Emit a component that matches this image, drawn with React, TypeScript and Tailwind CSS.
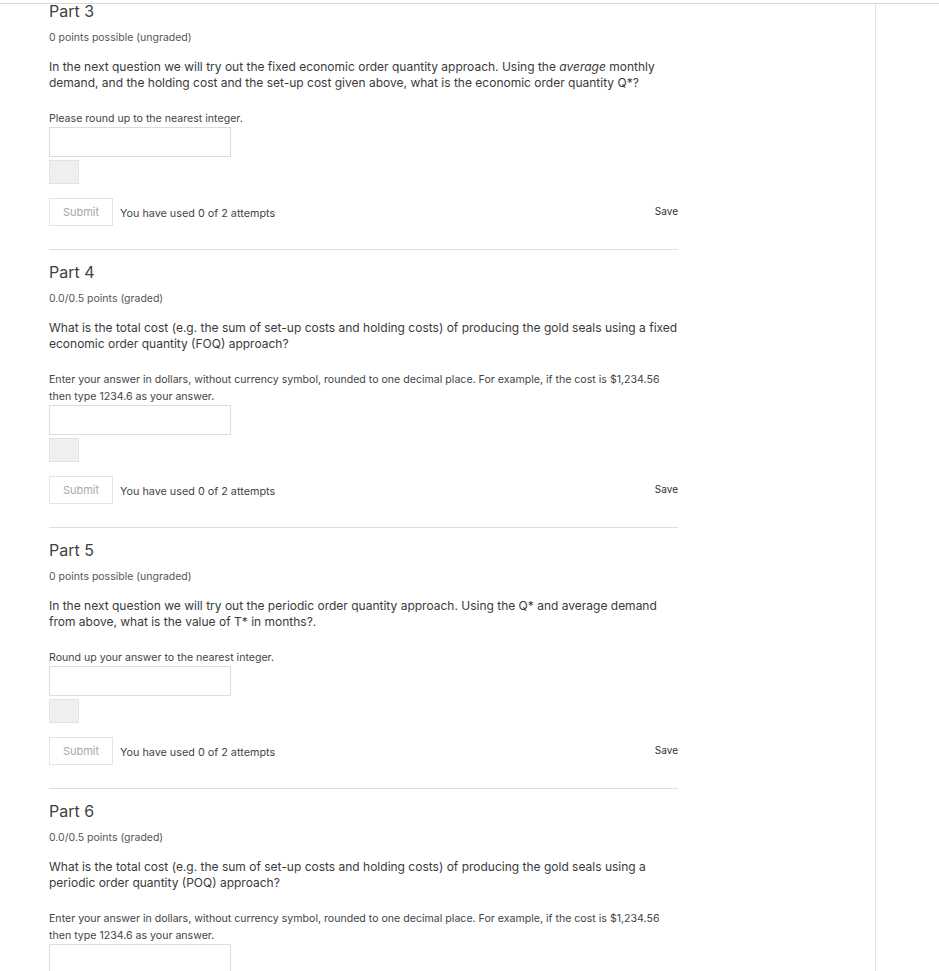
const parts = [
	{
		title: "Part 3",
		points: "0 points possible (ungraded)",
		question: (
			<>
				In the next question we will try out the fixed economic order quantity approach. Using the <em>average</em> monthly demand, and the holding cost and the set-up cost given above, what is the economic order quantity Q*?
			</>
		),
		hint: ["Please round up to the nearest integer."],
	},
	{
		title: "Part 4",
		points: "0.0/0.5 points (graded)",
		question: <>What is the total cost (e.g. the sum of set-up costs and holding costs) of producing the gold seals using a fixed economic order quantity (FOQ) approach?</>,
		hint: ["Enter your answer in dollars, without currency symbol, rounded to one decimal place. For example, if the cost is $1,234.56", "then type 1234.6 as your answer."],
	},
	{
		title: "Part 5",
		points: "0 points possible (ungraded)",
		question: <>In the next question we will try out the periodic order quantity approach. Using the Q* and average demand from above, what is the value of T* in months?.</>,
		hint: ["Round up your answer to the nearest integer."],
	},
	{
		title: "Part 6",
		points: "0.0/0.5 points (graded)",
		question: <>What is the total cost (e.g. the sum of set-up costs and holding costs) of producing the gold seals using a periodic order quantity (POQ) approach?</>,
		hint: ["Enter your answer in dollars, without currency symbol, rounded to one decimal place. For example, if the cost is $1,234.56", "then type 1234.6 as your answer."],
	},
]

type PartProps = {
	title: string
	points: string
	question: React.ReactNode
	hint: string[]
	first: boolean
}

const Part = ({ title, points, question, hint, first }: PartProps) => {
	return (
		<section className={"border-b border-[#dedede] pb-[23px] " + (first ? "-mt-[3px]" : "pt-[12px]")}>
			<h3 className="text-[16px] leading-5 text-[#414141] font-normal">{title}</h3>
			<div className="mt-[9px] text-[10.5px] leading-4 text-[#555]">{points}</div>
			<p className="mt-[13px] text-[12px] leading-4 text-[#3a3a3a] w-[632px]">{question}</p>
			<div className="mt-[19px] text-[10.6px] leading-[17px] text-[#444] whitespace-nowrap">
				{hint.map((h) => (
					<div key={h}>{h}</div>
				))}
			</div>
			<div className="w-[182px] h-[30px] border border-[#dcdcdc] bg-white" />
			<div className="mt-[3px] w-[30px] h-[24px] border border-[#e2e2e2] bg-[#efefef]" />
			<div className="mt-[14px] flex items-center">
				<div className="w-[64px] h-[28px] border border-[#e4e4e4] flex items-center justify-center text-[11px] text-[#a8a8a8]">Submit</div>
				<div className="ml-[7px] mt-[4px] text-[10.8px] text-[#444]">You have used 0 of 2 attempts</div>
				<div className="ml-auto text-[10px] text-[#333] -mt-[2px]">Save</div>
			</div>
		</section>
	)
}

export default function App() {
	return (
		<div className="w-[939px] h-[971px] overflow-hidden bg-white" style={{ fontFamily: "Inter, 'Noto Sans', sans-serif" }}>
			<div className="mt-[3px] border-t border-[#d9d9d9] flex">
				<div className="w-[876px] min-h-[968px] border-r border-[#e3e3e3] pl-[49px]">
					<div className="w-[629px]">
						{parts.map((p, i) => (
							<Part key={p.title} {...p} first={i === 0} />
						))}
					</div>
				</div>
			</div>
		</div>
	)
}
